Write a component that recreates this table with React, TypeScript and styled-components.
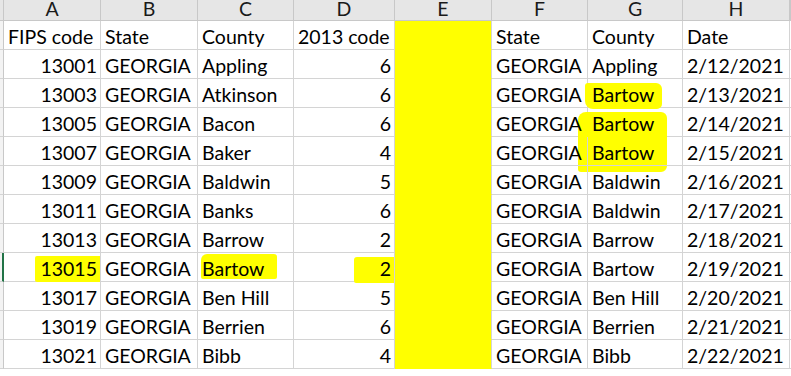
import React from "react";
import styled, { createGlobalStyle, css } from "styled-components";

const GlobalStyle = createGlobalStyle`
  html, body {
    margin: 0;
    padding: 0;
    background: #ffffff;
    overflow: hidden;
  }
`;

const COLS = "4px 97px 97px 96px 101px 97px 96px 95px 107px 1fr";

const Sheet = styled.div`
  width: 791px;
  height: 376px;
  overflow: hidden;
  font-family: Lato, "Liberation Sans", sans-serif;
  font-size: 19.5px;
  color: #000;
`;

const Row = styled.div<{ $head?: boolean }>`
  display: grid;
  grid-template-columns: ${COLS};
  height: ${(p) => (p.$head ? "21px" : "29px")};
`;

const ColHead = styled.div`
  box-sizing: border-box;
  background: #e6e6e6;
  border-right: 1px solid #c8c8c8;
  border-bottom: 1px solid #c8c8c8;
  display: flex;
  align-items: flex-start;
  justify-content: center;
  line-height: 17px;
  color: #1a1a1a;
`;

const RowHead = styled.div<{ $active?: boolean }>`
  box-sizing: border-box;
  background: #f3f3f3;
  border-right: 1px solid #c8c8c8;
  border-bottom: 1px solid #d4d4d4;
  ${(p) =>
    p.$active &&
    css`
      border-right: 2px solid #217346;
    `}
`;

const Cell = styled.div<{ $right?: boolean; $fill?: boolean }>`
  position: relative;
  box-sizing: border-box;
  border-right: 1px solid #d4d4d4;
  border-bottom: 1px solid #d4d4d4;
  display: flex;
  align-items: flex-end;
  justify-content: ${(p) => (p.$right ? "flex-end" : "flex-start")};
  padding: 0 ${(p) => (p.$right ? "3px" : "0")} 0 ${(p) => (p.$right ? "0" : "4px")};
  line-height: 25px;
  white-space: nowrap;
  ${(p) =>
    p.$fill &&
    css`
      background: #ffff00;
      border-bottom-color: #ffff00;
    `}
`;

const Text = styled.span`
  position: relative;
  z-index: 1;
`;

/* hand-drawn highlighter marks that sit behind the text */
const Mark = styled.span<{ $l: number; $t: number; $w: number; $h: number; $r?: string }>`
  position: absolute;
  left: ${(p) => p.$l}px;
  top: ${(p) => p.$t}px;
  width: ${(p) => p.$w}px;
  height: ${(p) => p.$h}px;
  background: #ffff00;
  border-radius: ${(p) => p.$r ?? "2px"};
  z-index: 0;
`;

type MarkSpec = { l: number; t: number; w: number; h: number; r?: string };

type RowData = {
  fips: string;
  state: string;
  county: string;
  code: string;
  state2: string;
  county2: string;
  date: string;
  active?: boolean;
  marks?: { a?: MarkSpec; c?: MarkSpec; d?: MarkSpec; g?: MarkSpec };
};

const rows: RowData[] = [
  { fips: "13001", state: "GEORGIA", county: "Appling", code: "6", state2: "GEORGIA", county2: "Appling", date: "2/12/2021" },
  {
    fips: "13003", state: "GEORGIA", county: "Atkinson", code: "6", state2: "GEORGIA", county2: "Bartow", date: "2/13/2021",
    marks: { g: { l: -3, t: 4, w: 77, h: 26, r: "3px 6px 5px 8px" } },
  },
  {
    fips: "13005", state: "GEORGIA", county: "Bacon", code: "6", state2: "GEORGIA", county2: "Bartow", date: "2/14/2021",
    marks: { g: { l: -10, t: 4, w: 89, h: 60, r: "8px 6px 6px 3px" } },
  },
  { fips: "13007", state: "GEORGIA", county: "Baker", code: "4", state2: "GEORGIA", county2: "Bartow", date: "2/15/2021" },
  { fips: "13009", state: "GEORGIA", county: "Baldwin", code: "5", state2: "GEORGIA", county2: "Baldwin", date: "2/16/2021" },
  { fips: "13011", state: "GEORGIA", county: "Banks", code: "6", state2: "GEORGIA", county2: "Baldwin", date: "2/17/2021" },
  { fips: "13013", state: "GEORGIA", county: "Barrow", code: "2", state2: "GEORGIA", county2: "Barrow", date: "2/18/2021" },
  {
    fips: "13015", state: "GEORGIA", county: "Bartow", code: "2", state2: "GEORGIA", county2: "Bartow", date: "2/19/2021",
    active: true,
    marks: {
      a: { l: 31, t: 3, w: 65, h: 26, r: "2px 0 0 2px" },
      c: { l: 3, t: 1, w: 76, h: 25, r: "6px 3px 2px 2px" },
      d: { l: 60, t: 4, w: 40, h: 26, r: "3px 0 0 2px" },
    },
  },
  { fips: "13017", state: "GEORGIA", county: "Ben Hill", code: "5", state2: "GEORGIA", county2: "Ben Hill", date: "2/20/2021" },
  { fips: "13019", state: "GEORGIA", county: "Berrien", code: "6", state2: "GEORGIA", county2: "Berrien", date: "2/21/2021" },
  { fips: "13021", state: "GEORGIA", county: "Bibb", code: "4", state2: "GEORGIA", county2: "Bibb", date: "2/22/2021" },
];

const letters = ["A", "B", "C", "D", "E", "F", "G", "H", ""];

const renderMark = (m?: MarkSpec) =>
  m ? <Mark $l={m.l} $t={m.t} $w={m.w} $h={m.h} $r={m.r} /> : null;

export default function App() {
  return (
    <>
      <GlobalStyle />
      <Sheet>
        <Row $head>
          <ColHead />
          {letters.map((l, i) => (
            <ColHead key={i}>{l}</ColHead>
          ))}
        </Row>

        <Row>
          <RowHead />
          <Cell><Text>FIPS code</Text></Cell>
          <Cell><Text>State</Text></Cell>
          <Cell><Text>County</Text></Cell>
          <Cell><Text>2013 code</Text></Cell>
          <Cell $fill />
          <Cell><Text>State</Text></Cell>
          <Cell><Text>County</Text></Cell>
          <Cell><Text>Date</Text></Cell>
          <Cell />
        </Row>

        {rows.map((r) => (
          <Row key={r.fips}>
            <RowHead $active={r.active} />
            <Cell $right>
              {renderMark(r.marks?.a)}
              <Text>{r.fips}</Text>
            </Cell>
            <Cell><Text>{r.state}</Text></Cell>
            <Cell>
              {renderMark(r.marks?.c)}
              <Text>{r.county}</Text>
            </Cell>
            <Cell $right>
              {renderMark(r.marks?.d)}
              <Text>{r.code}</Text>
            </Cell>
            <Cell $fill />
            <Cell><Text>{r.state2}</Text></Cell>
            <Cell>
              {renderMark(r.marks?.g)}
              <Text>{r.county2}</Text>
            </Cell>
            <Cell><Text>{r.date}</Text></Cell>
            <Cell />
          </Row>
        ))}
      </Sheet>
    </>
  );
}
